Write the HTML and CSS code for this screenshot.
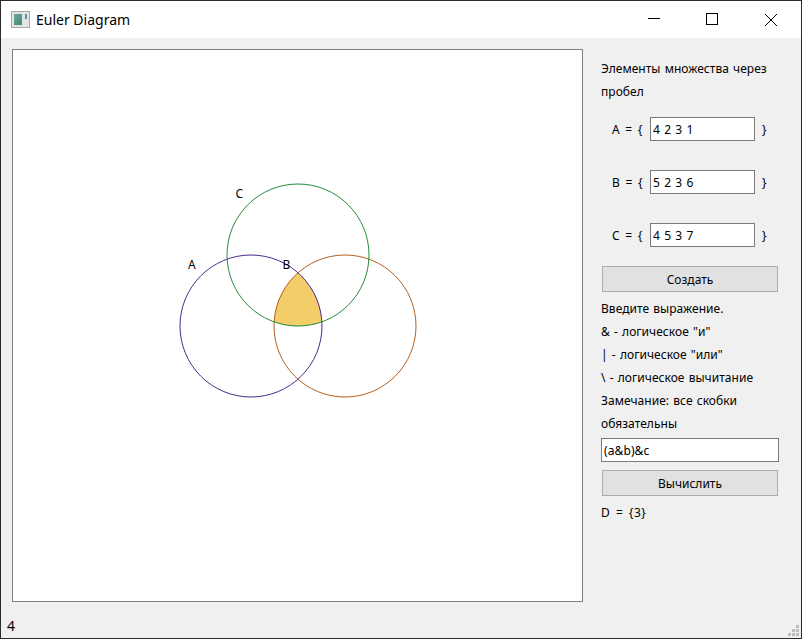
FILE: index.html
```html
<!DOCTYPE html>
<html lang="ru">
<head>
  <meta charset="UTF-8" />
  <title>Euler Diagram</title>
  <link rel="stylesheet" href="styles.css">
</head>
<body>

  <div class="window">
    <div class="titlebar">
      <div class="app-icon"><div class="app-icon-main"></div><div class="app-icon-side"></div></div>
      <span class="title">Euler Diagram</span>
      <div class="win-controls">
        <svg class="win-btn" width="58" height="37" viewBox="0 1 58 37">
          <path d="M23 18.500H35" stroke="#000" fill="none" />
        </svg>
        <svg class="win-btn" width="58" height="37" viewBox="0 1 58 37">
          <rect x="23.500" y="13.500" width="11" height="11" stroke="#000" fill="none" />
        </svg>
        <svg class="win-btn" width="58" height="37" viewBox="0 1 58 37">
          <path d="M24 14L36 26M36 14L24 26" stroke="#000" fill="none" />
        </svg>
      </div>
    </div>

    <div class="content">
      <div class="canvas">
        <svg class="diagram" width="569" height="551" viewBox="13 50 569 551">
          <path class="result" d="M298 272.8A71 71 0 0 0 274.1 321.9A71 71 0 0 0 321.9 321.9A71 71 0 0 0 298 272.8Z" />
          <circle class="circle-a" cx="251" cy="326" r="71" />
          <circle class="circle-b" cx="345" cy="326" r="71" />
          <circle class="circle-c" cx="298" cy="255" r="71" />
          <text class="set-name" x="188" y="269">A</text>
          <text class="set-name" x="282.500" y="269">B</text>
          <text class="set-name" x="235.500" y="198">C</text>
        </svg>
      </div>

      <div class="panel">
        <div class="line">Элементы множества через</div>
        <div class="line">пробел</div>

        <div class="set-row first">
          <span class="set-label">A = {</span>
          <input class="field" type="text" value="4 2 3 1" />
          <span class="set-close">}</span>
        </div>
        <div class="set-row">
          <span class="set-label">B = {</span>
          <input class="field" type="text" value="5 2 3 6" />
          <span class="set-close">}</span>
        </div>
        <div class="set-row">
          <span class="set-label">C = {</span>
          <input class="field" type="text" value="4 5 3 7" />
          <span class="set-close">}</span>
        </div>

        <button class="action create">Создать</button>

        <div class="help">
          <div class="line">Введите выражение.</div>
          <div class="line">&amp; - логическое "и"</div>
          <div class="line">| - логическое "или"</div>
          <div class="line">\ - логическое вычитание</div>
          <div class="line">Замечание: все скобки</div>
          <div class="line">обязательны</div>
        </div>

        <input class="field expr" type="text" value="(a&amp;b)&amp;c" />
        <button class="action calc">Вычислить</button>
        <div class="line answer">D = {3}</div>
      </div>
    </div>

    <div class="statusbar">
      <span class="status-text">4</span>
      <svg class="grip" width="12" height="12" viewBox="0 0 12 12">
        <path d="M8 0h3v3H8zM4 4h3v3H4zM8 4h3v3H8zM0 8h3v3H0zM4 8h3v3H4zM8 8h3v3H8z" fill="#bdbdbd" />
      </svg>
    </div>
  </div>

</body>
</html>
```

FILE: styles.css
```css
html, body {
  margin: 0;
  padding: 0;
}

body {
  width: 802px;
  height: 639px;
  overflow: hidden;
  font-family: "Noto Sans", sans-serif;
  font-size: 12px;
  color: #000;
}

.window {
  box-sizing: border-box;
  width: 802px;
  height: 639px;
  display: flex;
  flex-direction: column;
  background-color: #f0f0f0;
  border: 1px solid #2b2b2b;
}

.titlebar {
  height: 37px;
  flex: none;
  display: flex;
  align-items: center;
  background-color: #fff;
}

.app-icon {
  box-sizing: border-box;
  width: 19px;
  height: 17px;
  margin-left: 10px;
  margin-top: -1px;
  display: flex;
  gap: 3px;
  padding: 2px;
  background-color: #e4e4e4;
  border: 1px solid #a8a8a8;
}

.app-icon-main {
  width: 9px;
  background: linear-gradient(135deg, #6fa6a6, #3f8f6a);
}

.app-icon-side {
  width: 2px;
  height: 5px;
  background-color: #4f9aa0;
}

.title {
  margin-left: 6px;
  font-size: 14px;
}

.win-controls {
  margin-left: auto;
  margin-right: 2px;
  display: flex;
}

.win-btn {
  display: block;
}

.content {
  flex: 1;
  display: flex;
  min-height: 0;
}

.canvas {
  box-sizing: border-box;
  width: 571px;
  height: 553px;
  margin: 11px 0 0 11px;
  background-color: #fff;
  border: 1px solid #808080;
}

.diagram {
  display: block;
}

.diagram circle {
  fill: none;
  stroke-width: 1;
}

.result {
  fill: #f4cd6b;
}

.circle-a {
  stroke: #4b2a8c;
}

.circle-b {
  stroke: #b5601f;
}

.circle-c {
  stroke: #228b3c;
}

.set-name {
  font-family: "Noto Sans", sans-serif;
  font-size: 12px;
  fill: #000;
}

.panel {
  width: 178px;
  margin-left: 18px;
  padding-top: 19px;
}

.line {
  height: 23px;
  line-height: 23px;
  white-space: nowrap;
  letter-spacing: 0.04px;
  word-spacing: 1px;
}

.set-row {
  height: 24px;
  margin-top: 29px;
  display: flex;
  align-items: center;
}

.set-row.first {
  margin-top: 14px;
}

.set-label {
  width: 38px;
  margin-left: 11px;
  white-space: nowrap;
  word-spacing: 2.500px;
}

.set-close {
  margin-left: 7px;
}

.field {
  box-sizing: border-box;
  width: 105px;
  height: 24px;
  padding: 0 2px;
  background-color: #fff;
  border: 1px solid #7a7a7a;
  border-radius: 0;
  outline: none;
  font-family: inherit;
  font-size: 12px;
  word-spacing: 1px;
  letter-spacing: 0.100px;
  color: #000;
}

.field.expr {
  display: block;
  width: 178px;
  margin-top: 3px;
}

.action {
  display: block;
  box-sizing: border-box;
  width: 176px;
  height: 26px;
  margin-left: 1px;
  padding: 0;
  background-color: #e1e1e1;
  border: 1px solid #adadad;
  font-family: inherit;
  font-size: 12px;
  color: #000;
}

.create {
  margin-top: 19px;
}

.calc {
  margin-top: 8px;
}

.help {
  margin-top: 5px;
}

.answer {
  margin-top: 5px;
  letter-spacing: 0.500px;
  word-spacing: 2px;
}

.statusbar {
  height: 26px;
  flex: none;
  display: flex;
  align-items: flex-end;
  justify-content: space-between;
}

.status-text {
  margin-left: 6px;
  margin-bottom: 3px;
  font-size: 14px;
  line-height: 18px;
}

.grip {
  display: block;
  margin-right: 1px;
  margin-bottom: 1px;
}
```
